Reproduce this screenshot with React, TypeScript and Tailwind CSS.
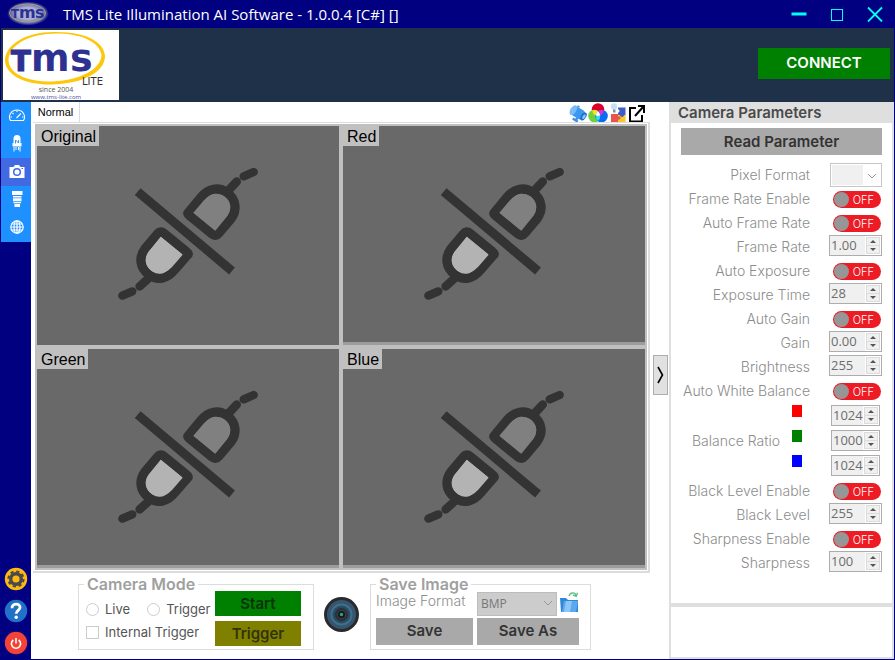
import React, { useState } from "react";

const geo = "font-['Inter','Open_Sans',sans-serif]";

function BrandArt({ className }: { className: string }) {
  return (
    <svg viewBox="0 0 116 70" className={className} role="img" aria-label="TMS Lite">
      <path
        fillRule="evenodd"
        fill="#fdc70c"
        d="M54 2C24 1 2 14 2 31C3 46 24 55 48 54.500C80 54 102 42 102 26C101 11 82 2.500 54 2ZM56 3.500C80 4 97 13 98.500 25C98 39 78 50 50 51.500C24 52 6 44 5.500 30C6 15 26 3 56 3.500Z"
      />
      <g fill="#2e3192" fontFamily="DejaVu Sans" fontWeight="bold">
        <text x="8" y="41" fontSize="29" stroke="#2e3192" strokeWidth="1.200">T</text>
        <text x="28" y="41" fontSize="37">m</text>
        <text x="67" y="41" fontSize="38">s</text>
      </g>
      <text x="79" y="55" fontSize="10" fontFamily="DejaVu Sans" fill="#333">LITE</text>
      <text x="53" y="62" fontSize="7" textAnchor="middle" fontFamily="Open Sans" fill="#555">since 2004</text>
      <text x="53" y="69" fontSize="6" textAnchor="middle" fontFamily="Open Sans" fill="#4a4ca0">www.tms-lite.com</text>
    </svg>
  );
}

function TitleBar() {
  return (
    <header className="flex h-7 shrink-0 items-center pl-[6px]">
      <svg viewBox="0 0 42 26" className="h-[26px] w-[42px]" aria-hidden="true">
        <defs>
          <radialGradient id="glow">
            <stop offset="0.5" stopColor="#a9aed2" />
            <stop offset="0.8" stopColor="#6a72b0" />
            <stop offset="1" stopColor="#000080" />
          </radialGradient>
        </defs>
        <ellipse cx="21" cy="12.500" rx="21" ry="12" fill="url(#glow)" />
        <ellipse cx="20.500" cy="12" rx="18" ry="9" fill="none" stroke="#a9a06c" />
        <g fill="#2e3192" fontFamily="DejaVu Sans" fontWeight="bold">
          <text x="4" y="17" fontSize="12">T</text>
          <text x="12" y="17" fontSize="16">m</text>
          <text x="28" y="17" fontSize="16">s</text>
        </g>
      </svg>
      <h1 className="ml-[14px] flex-1 whitespace-nowrap font-['Open_Sans',sans-serif] text-[15px] font-medium leading-5 text-white">
        TMS Lite Illumination AI Software - 1.0.0.4 [C#] []
      </h1>
      <div className="flex items-center gap-[22px] pr-[11px] text-[#00ffff]">
        <button aria-label="Minimize" className="block">
          <svg viewBox="0 0 16 16" className="size-4"><path d="M0.500 8h15" stroke="currentColor" strokeWidth="3" /></svg>
        </button>
        <button aria-label="Maximize" className="block">
          <svg viewBox="0 0 16 16" className="size-4"><rect x="2.500" y="3.500" width="11" height="11" fill="none" stroke="currentColor" /></svg>
        </button>
        <button aria-label="Close" className="block">
          <svg viewBox="0 0 16 16" className="size-4"><path d="M1 1.500l14 14M15 1.500l-14 14" stroke="currentColor" strokeWidth="1.800" /></svg>
        </button>
      </div>
    </header>
  );
}

const navIcons: { name: string; art: React.ReactNode }[] = [
  {
    name: "Dashboard",
    art: (
      <g fill="none" stroke="#fff" strokeWidth="1.100">
        <path d="M2.500 13.500A7.500 7 0 1 1 15.500 13.500Z" />
        <path d="M8.500 11L13 6.500M9 3.500v1.500M4.500 6l1 1M2.500 10h1.500M14 10h1.500" />
      </g>
    ),
  },
  {
    name: "Light",
    art: (
      <g>
        <path d="M5.500 8V3.500a3.500 3.500 0 0 1 7 0V8h1v3.500h-9V8Z" fill="#fff" />
        <path d="M6 12v4.500M8 12v3M10.500 12v3M12 12v4.500" stroke="#fff" />
        <path d="M7.500 8.500V5l3 3V5" fill="none" stroke="#1e90ff" strokeWidth="0.900" />
      </g>
    ),
  },
  {
    name: "Camera",
    art: (
      <g>
        <path d="M1.500 4h4l1.500-2h4l1.500 2h4v11h-15Z" fill="#fff" />
        <circle cx="9" cy="9" r="3.300" fill="none" stroke="#4169e1" strokeWidth="1.500" />
        <path d="M13.500 5.500h1.500" stroke="#4169e1" />
      </g>
    ),
  },
  {
    name: "Lens",
    art: (
      <path d="M4 0h10.500v4H4ZM5 5h8.500v1.500H5ZM5 7.300h8.500v3H5ZM5.500 11h7.500v1.300H5.500ZM6.500 13h5.500v3H6.500Z" fill="#fff" />
    ),
  },
  {
    name: "Network",
    art: (
      <g fill="none" stroke="#fff" strokeWidth="1.200">
        <circle cx="9" cy="8" r="6.200" />
        <ellipse cx="9" cy="8" rx="3" ry="6.200" />
        <path d="M9 1.800v12.400M2.800 8h12.400M3.700 5h10.600M3.700 11h10.600" />
      </g>
    ),
  },
];

function Sidebar() {
  const [active, setActive] = useState("Camera");
  return (
    <nav className="flex w-[30px] shrink-0 flex-col justify-between">
      <div className="flex flex-col">
        {navIcons.map((n) => (
          <button
            key={n.name}
            aria-label={n.name}
            onClick={() => setActive(n.name)}
            className={`flex h-7 items-center justify-center pl-[2px] ${n.name === active ? "bg-[#4169e1]" : "bg-[#1e90ff]"}`}
          >
            <svg viewBox="0 0 18 18" className="size-[18px]">{n.art}</svg>
          </button>
        ))}
      </div>
      <div className="flex flex-col items-center gap-2 pb-1">
        <button aria-label="Settings">
          <svg viewBox="0 0 24 24" className="size-6">
            <circle cx="12" cy="12" r="11.200" fill="#fdb813" />
            <circle cx="12" cy="12" r="5.300" fill="none" stroke="#4a4a4a" strokeWidth="3.400" />
            <circle cx="12" cy="12" r="7.600" fill="none" stroke="#4a4a4a" strokeWidth="2" strokeDasharray="3.200 2.770" />
          </svg>
        </button>
        <button aria-label="Help">
          <svg viewBox="0 0 24 24" className="size-6">
            <circle cx="12" cy="12" r="11.200" fill="#2171c9" />
            <path d="M8 9.200C8 3.500 16.500 4 16 8.700C15.700 11.500 12.200 11.500 12.200 14.800" fill="none" stroke="#fff" strokeWidth="2.800" />
            <circle cx="12.200" cy="18.300" r="1.700" fill="#fff" />
          </svg>
        </button>
        <button aria-label="Power">
          <svg viewBox="0 0 24 24" className="size-6">
            <circle cx="12" cy="12" r="11.200" fill="#f44336" />
            <path d="M9.300 9a4.600 4.600 0 1 0 5.400 0M12 7v5.500" fill="none" stroke="#fff" strokeWidth="1.600" />
          </svg>
        </button>
      </div>
    </nav>
  );
}

function Unplugged() {
  return (
    <svg viewBox="258 137 432 405" className="h-[135px] w-[144px]" aria-hidden="true">
      <g fill="none" stroke="#333" strokeLinecap="round">
        <path d="M323 214L606 452" strokeWidth="27" strokeLinecap="butt" />
        <path d="M594 212L620 184M329 498L362 468" strokeWidth="26" />
        <path d="M641 168L671 155M277 526L307 513" strokeWidth="25" />
      </g>
      <g stroke="#333" strokeWidth="28" strokeLinejoin="round">
        <path d="M475 277L512 232C535 203 566 199 590 216C622 240 620 272 603 295L565 340Q557 350 546 341L479 286Q471 280 475 277Z" fill="#808080" />
        <path d="M473 403L434 448C411 477 382 481 358 464C326 440 328 408 345 385L383 340Q391 330 402 339L469 394Q477 400 473 403Z" fill="#b3b3b3" />
      </g>
      <path d="M490 277L522 240C541 219 564 217 581 227C603 241 605 266 592 286L556 331Z" fill="#808080" />
      <path d="M458 403L426 440C407 461 384 463 367 453C345 439 343 414 356 394L392 349Z" fill="#b3b3b3" />
    </svg>
  );
}

function View({ label, shade = true }: { label: string; shade?: boolean }) {
  return (
    <section className={`relative flex justify-center bg-[#696969] pt-10 ${shade ? "border-b-[3px] border-[#9c9c9c]" : ""}`}>
      <h2 className="absolute left-0 top-0 h-5 bg-[#c0c0c0] pl-1 pr-[3px] font-['Liberation_Sans',sans-serif] text-base leading-[22px] text-black">{label}</h2>
      <Unplugged />
    </section>
  );
}

function ToolIcons() {
  return (
    <div className="flex items-center pr-1 pt-[2px]">
      <button aria-label="Camera device">
        <svg viewBox="0 0 20 20" className="size-5">
          <g transform="rotate(32 10 10)">
            <path d="M7 5V3.500M12 14.500v3M8.500 17.500h6" stroke="#3b8fe6" strokeWidth="2.400" />
            <rect x="3" y="5" width="13" height="10" rx="3" fill="#3b97ef" />
            <ellipse cx="4.500" cy="10" rx="3" ry="5.500" fill="#7abcfb" />
            <ellipse cx="16.500" cy="10" rx="2.500" ry="4.500" fill="#1c6fc9" />
            <ellipse cx="17" cy="10" rx="1.300" ry="2.500" fill="#8fc8ff" />
          </g>
        </svg>
      </button>
      <button aria-label="Colour channels">
        <svg viewBox="0 0 20 20" className="size-5">
          <circle cx="10" cy="6.500" r="6.300" fill="#dc0028" />
          <circle cx="6.500" cy="13" r="6.300" fill="#6fd23c" />
          <circle cx="13.500" cy="13" r="6.300" fill="#0a6cf5" />
          <path d="M4.300 7.300a6 6 0 0 1 5.700 0.900a6 6 0 0 0-2.200 4.400a6 6 0 0 1-3.500-5.300Z" fill="#fbe122" />
          <path d="M15.700 7.300a6 6 0 0 0-5.700 0.900a6 6 0 0 1 2.200 4.400a6 6 0 0 0 3.500-5.300Z" fill="#e62bc6" />
          <path d="M10 18a6 6 0 0 1-2.200-5.400a6 6 0 0 0 4.400 0a6 6 0 0 1-2.200 5.400Z" fill="#2be0e6" />
          <path d="M10 8.200a6 6 0 0 0-2.200 4.400a6 6 0 0 0 4.400 0a6 6 0 0 0-2.200-4.400Z" fill="#fff" />
        </svg>
      </button>
      <button aria-label="Plugins">
        <svg viewBox="0 0 20 20" className="size-5">
          <path d="M10 4.500h7.500v8H10Z" fill="#3a5fc8" />
          <path d="M3 11h7.500v8H3Z" fill="#e8554e" />
          <path d="M10 12h7.500v7H10Z" fill="#fbc52d" />
          <circle cx="9.800" cy="8" r="1.700" fill="#fff" />
          <circle cx="14" cy="12.300" r="1.800" fill="#3a5fc8" />
          <circle cx="10.800" cy="15" r="1.700" fill="#e8554e" />
          <circle cx="6" cy="3.500" r="3.200" fill="#c4e2f6" />
          <path d="M5 6.500h2.500v3H5Z" fill="#7a92a6" />
        </svg>
      </button>
      <button aria-label="Open in new window">
        <svg viewBox="0 0 20 20" className="size-5">
          <path d="M8 5H2v13.500h12v-6.500" fill="none" stroke="#000" strokeWidth="2" />
          <path d="M10 3h6v7M15.500 3.500L7 13" fill="none" stroke="#000" strokeWidth="2" />
        </svg>
      </button>
    </div>
  );
}

const legend = `${geo} px-[3px] text-base font-semibold leading-[18px] text-[#a0a0a0]`;
const greyBtn = `${geo} h-[27px] bg-[#a9a9a9] text-[15px] font-semibold text-[#333]`;
const markBase = "size-[13px] appearance-none border border-[#ccc] bg-white checked:bg-[#555]";

function CameraMode() {
  return (
    <fieldset className="h-[75px] w-[236px] border border-[#dcdcdc] pl-[5px] pr-3">
      <legend className={legend}>Camera Mode</legend>
      <div className="flex justify-between pl-[2px]">
        <div className={`${geo} flex flex-col gap-[7px] pt-2 text-[13px] leading-4 text-[#555]`}>
          <div className="flex gap-[17px]">
            <label className="flex items-center gap-[6px]">
              <input type="radio" name="mode" className={`${markBase} rounded-full`} />
              Live
            </label>
            <label className="flex items-center gap-[6px]">
              <input type="radio" name="mode" className={`${markBase} rounded-full`} />
              Trigger
            </label>
          </div>
          <label className="flex items-center gap-[6px]">
            <input type="checkbox" className={markBase} />
            Internal Trigger
          </label>
        </div>
        <div className="-mt-[2px] flex w-[86px] flex-col gap-[5px]">
          <button className={`${geo} h-[25px] bg-[#008000] pt-px text-[15px] font-semibold text-[#0a330a]`}>Start</button>
          <button className={`${geo} h-[25px] bg-[#808000] pt-px text-[15px] font-semibold text-[#33330a]`}>Trigger</button>
        </div>
      </div>
    </fieldset>
  );
}

function LensArt() {
  return (
    <svg viewBox="0 0 36 36" className="size-9" aria-hidden="true">
      <circle cx="17.500" cy="17.500" r="17.500" fill="#2a2a2c" />
      <circle cx="17.500" cy="17.500" r="14.500" fill="#35566e" />
      <circle cx="17.500" cy="17.500" r="11" fill="#3f6f8e" />
      <circle cx="17.500" cy="17.500" r="9" fill="#2c4a5e" />
      <circle cx="17.500" cy="17.500" r="6.500" fill="#22303a" />
      <circle cx="17.500" cy="17.500" r="5" fill="#3a3a3e" />
      <circle cx="17.500" cy="17.500" r="3.500" fill="#14181a" />
      <circle cx="17.500" cy="17.500" r="1.700" fill="#22a884" />
    </svg>
  );
}

function SaveImage() {
  return (
    <fieldset className="h-[75px] w-[221px] border border-[#dcdcdc] pl-[5px] pr-[10px]">
      <legend className={legend}>Save Image</legend>
      <div className="-mt-[3px] flex flex-col gap-1">
        <div className="flex h-6">
          <label htmlFor="format" className={`${geo} mt-[3px] w-[101px] text-sm font-light leading-4 text-[#8c8c8c]`}>Image Format</label>
          <span className="relative">
            <select id="format" className="h-6 w-20 appearance-none border border-[#bcbcbc] bg-[#cccccc] pl-[3px] font-['Open_Sans',sans-serif] text-xs text-[#777]">
              <option>BMP</option>
            </select>
            <svg viewBox="0 0 10 6" className="pointer-events-none absolute right-1 top-[10px] h-[6px] w-[10px]"><path d="M1 1l4 4 4-4" fill="none" stroke="#999" /></svg>
          </span>
          <button aria-label="Open folder" className="ml-[3px]">
            <svg viewBox="0 0 20 22" className="h-[22px] w-5">
              <path d="M0 7h6l2 2h10v12H1Z" fill="#2f86dc" />
              <path d="M4 10h14l-2 11H2Z" fill="#5aa9ee" />
              <path d="M6 10h6l-2 11H4Z" fill="#8cc6f6" />
              <path d="M9 5C10 1.500 15 0.500 16 4.500M13 4l3.300 1.300 1.200-3.500" fill="none" stroke="#5fc28c" strokeWidth="1.400" />
            </svg>
          </button>
        </div>
        <div className="flex gap-1">
          <button className={`${greyBtn} w-[97px]`}>Save</button>
          <button className={`${greyBtn} w-[102px]`}>Save As</button>
        </div>
      </div>
    </fieldset>
  );
}

const rowLabel = `${geo} text-right text-sm font-light leading-6 text-[#8c8c8c]`;

function NumberBox({ id, value, narrow }: { id: string; value: string; narrow?: boolean }) {
  return (
    <div className={`flex h-[21px] border border-[#adadad] bg-[#f0f0f0] ${narrow ? "w-[49px]" : "w-[53px]"}`}>
      <input
        id={id}
        defaultValue={value}
        aria-label={id}
        className="min-w-0 flex-1 bg-transparent pb-[2px] pl-px font-['Open_Sans',sans-serif] text-[13px] leading-4 text-[#6d6d6d] outline-none"
      />
      <div className="flex w-4 shrink-0 flex-col gap-px border border-white bg-[#dcdcdc] p-px">
        <button aria-label="Increase" className="flex flex-1 items-center justify-center bg-[#f0f0f0]">
          <svg viewBox="0 0 6 3" className="h-[3px] w-[6px]"><path d="M0 3l3-3 3 3Z" fill="#555" /></svg>
        </button>
        <button aria-label="Decrease" className="flex flex-1 items-center justify-center bg-[#f0f0f0]">
          <svg viewBox="0 0 6 3" className="h-[3px] w-[6px]"><path d="M0 0l3 3 3-3Z" fill="#555" /></svg>
        </button>
      </div>
    </div>
  );
}

function Toggle({ id }: { id: string }) {
  return (
    <span className="relative flex">
      <input
        id={id}
        type="checkbox"
        role="switch"
        className="h-[17px] w-12 appearance-none rounded-full bg-[#ed1c24] p-px before:block before:size-[15px] before:rounded-full before:bg-[#969696]"
      />
      <span className={`${geo} pointer-events-none absolute right-[7px] top-0 text-[11px] font-light leading-[18px] text-white`}>OFF</span>
    </span>
  );
}

type Param = { label: string; value?: string };
const before: Param[] = [
  { label: "Frame Rate Enable" },
  { label: "Auto Frame Rate" },
  { label: "Frame Rate", value: "1.00" },
  { label: "Auto Exposure" },
  { label: "Exposure Time", value: "28" },
  { label: "Auto Gain" },
  { label: "Gain", value: "0.00" },
  { label: "Brightness", value: "255" },
  { label: "Auto White Balance" },
];
const after: Param[] = [
  { label: "Black Level Enable" },
  { label: "Black Level", value: "255" },
  { label: "Sharpness Enable" },
  { label: "Sharpness", value: "100" },
];

function Row({ label, value }: Param) {
  const id = label.replace(/ /g, "-").toLowerCase();
  return (
    <div className="flex h-6 items-center justify-end">
      <label htmlFor={id} className={rowLabel}>{label}</label>
      <div className="flex w-[72px] justify-end">
        {value ? <div className="pb-[3px]"><NumberBox id={id} value={value} /></div> : <div className="pr-px"><Toggle id={id} /></div>}
      </div>
    </div>
  );
}

function ParameterPanel() {
  return (
    <aside className="flex w-[225px] shrink-0 flex-col border-x-2 border-b-2 border-[#dfdfdf] bg-white">
      <h2 className={`${geo} bg-[#dfdfdf] pl-[7px] text-[15px] font-semibold leading-[21px] text-[#4a4a4a]`}>Camera Parameters</h2>
      <div className="flex flex-1 flex-col px-[10px] pt-[5px]">
        <button className={`${greyBtn} mb-2 shrink-0 pt-px`}>Read Parameter</button>
        <div className="flex h-6 items-center justify-end">
          <label htmlFor="pixel-format" className={rowLabel}>Pixel Format</label>
          <div className="flex w-[72px] justify-end">
            <span className="relative flex border border-[#c6c6c6] p-px">
              <select id="pixel-format" className="h-[20px] w-[48px] appearance-none bg-[linear-gradient(90deg,#f0f0f0_31px,#fff_31px)]" />
              <svg viewBox="0 0 10 6" className="pointer-events-none absolute right-1 top-[9px] h-[6px] w-[10px]"><path d="M1 1l4 4 4-4" fill="none" stroke="#999" /></svg>
            </span>
          </div>
        </div>
        {before.map((p) => <Row key={p.label} {...p} />)}
        <div className="flex items-center justify-end pb-px">
          <span className={rowLabel}>Balance Ratio</span>
          <div className="ml-3 flex flex-col gap-[13px] pb-[9px]">
            <span className="h-3 w-[10px] bg-[#ff0000]" />
            <span className="h-3 w-[10px] bg-[#008000]" />
            <span className="h-3 w-[10px] bg-[#0000ff]" />
          </div>
          <div className="ml-[29px] mr-[2px] flex flex-col gap-1 py-[2px]">
            <NumberBox id="red-ratio" value="1024" narrow />
            <NumberBox id="green-ratio" value="1000" narrow />
            <NumberBox id="blue-ratio" value="1024" narrow />
          </div>
        </div>
        {after.map((p) => <Row key={p.label} {...p} />)}
      </div>
      <div className="h-[54px] border-t-4 border-[#dfdfdf]" />
    </aside>
  );
}

export default function App() {
  return (
    <div className="flex h-screen w-full flex-col bg-[#000080] px-px pb-px">
      <TitleBar />
      <div className="flex h-[74px] shrink-0 items-center justify-between bg-[#1f3049] pl-[2px] pr-[4px]">
        <div className="mb-px bg-white"><BrandArt className="h-[70px] w-[116px]" /></div>
        <button className={`${geo} mb-[3px] h-[31px] w-[132px] bg-[#008000] text-[15px] font-semibold text-white`}>CONNECT</button>
      </div>
      <div className="flex min-h-0 flex-1">
        <Sidebar />
        <main className="flex min-w-0 flex-1 flex-col bg-white pl-[2px]">
          <div className="flex min-h-0 flex-1 flex-col">
            <div className="flex h-5 shrink-0 items-stretch justify-between">
              <button className="w-[47px] border-r border-[#dcdcdc] pr-px font-['Liberation_Sans',sans-serif] text-[11px] leading-5 text-black">Normal</button>
              <ToolIcons />
            </div>
            <div className="mr-[2px] flex flex-1 border-b-2 border-r-2 border-t border-[#dcdcdc] pb-px pl-[2px] pr-px pt-px">
              <div className="grid flex-1 grid-cols-2 grid-rows-2 gap-1 bg-[#c0c0c0] p-[2px]">
                <View label="Original" shade={false} />
                <View label="Red" />
                <View label="Green" />
                <View label="Blue" />
              </div>
            </div>
          </div>
          <div className="flex h-[86px] shrink-0 items-start gap-[10px] pl-[45px] pt-[2px]">
            <CameraMode />
            <div className="pt-[22px]"><LensArt /></div>
            <SaveImage />
          </div>
        </main>
        <div className="flex w-[17px] shrink-0 items-center bg-white pb-3 pl-px">
          <button aria-label="Collapse panel" className="flex h-10 w-[15px] items-center justify-center border border-[#adadad] bg-[#e1e1e1]">
            <svg viewBox="0 0 7 18" className="h-[18px] w-[7px]"><path d="M1 1l4.500 8L1 17" fill="none" stroke="#000" strokeWidth="1.600" /></svg>
          </button>
        </div>
        <ParameterPanel />
      </div>
    </div>
  );
}
